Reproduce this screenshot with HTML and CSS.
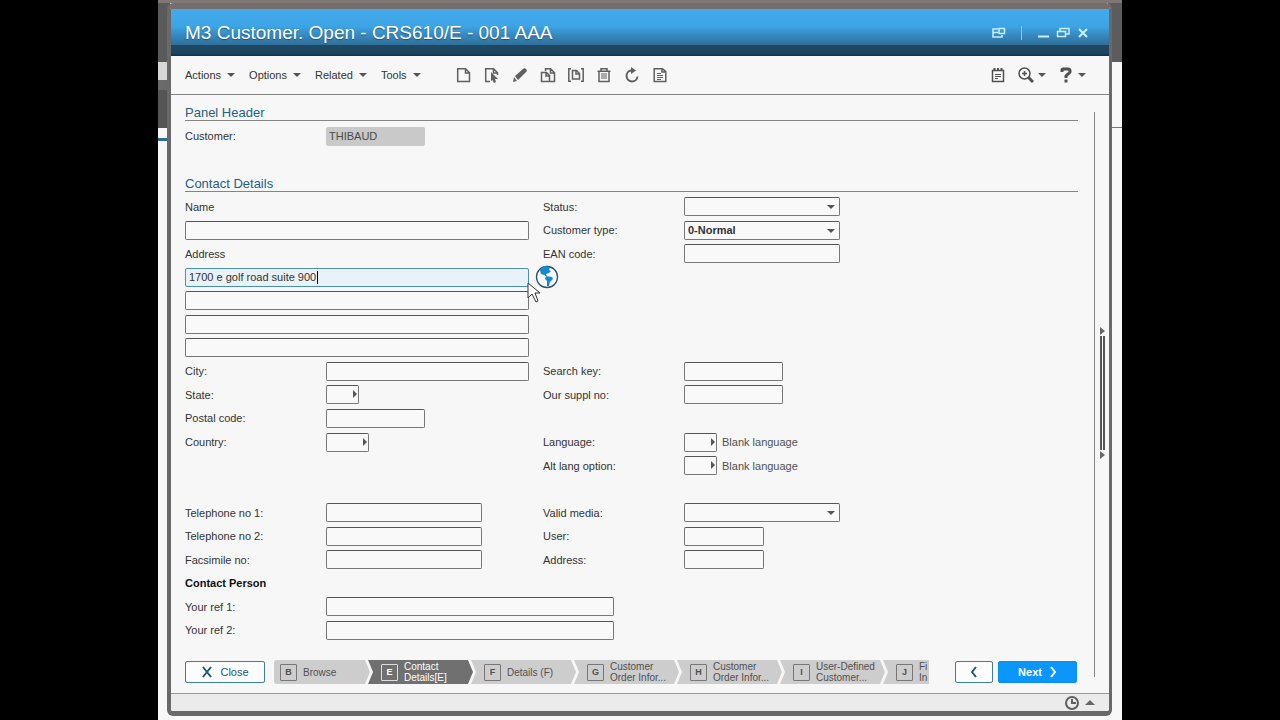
FILE: index.html
```html
<!DOCTYPE html>
<html lang="en">
<head>
<meta charset="utf-8">
<title>M3 Customer. Open - CRS610/E - 001 AAA</title>
<link rel="stylesheet" href="styles.css">
</head>
<body>
<div class="desktop">
<main class="window">
  <header class="titlebar">
    <h1>M3 Customer. Open - CRS610/E - 001 AAA</h1>
    <div class="window-controls">
      <button type="button" aria-label="Detach"><svg width="16" height="14" viewBox="0 0 16 14"><path d="M7 3H2v8h9V9M2 6.500h5M8 2.500h5.500v5H8z" stroke-width="1.500"/></svg></button>
      <span class="divider"></span>
      <button type="button" aria-label="Minimize"><svg width="14" height="14" viewBox="0 0 14 14"><path d="M2 10.500h11" stroke-width="2"/></svg></button>
      <button type="button" aria-label="Restore"><svg width="14" height="14" viewBox="0 0 14 14"><path d="M4 5V2.500h9V8h-3M1.500 5.500h8v5h-8z" stroke-width="1.500"/></svg></button>
      <button type="button" aria-label="Close window"><svg width="14" height="14" viewBox="0 0 14 14"><path d="M3 3l8 8M11 3l-8 8" stroke-width="2"/></svg></button>
    </div>
  </header>

  <nav class="toolbar">
    <div class="menus">
      <button type="button">Actions<i class="caret"></i></button>
      <button type="button">Options<i class="caret"></i></button>
      <button type="button">Related<i class="caret"></i></button>
      <button type="button">Tools<i class="caret"></i></button>
    </div>
    <div class="tools">
      <button type="button" aria-label="New"><svg viewBox="0 0 16 16"><path d="M1.700 1.700h7.800l4 4v8.800H1.700zM9.500 2v4h4"/></svg></button>
      <button type="button" aria-label="Select"><svg viewBox="0 0 16 16"><path d="M6 14.500H1.700V1.700h7.800l4 4V8M9.500 2v4h4"/><path class="solid" d="M7 5l7 7h-3l1 3-2 1-1.500-3L7 14z"/></svg></button>
      <button type="button" aria-label="Edit"><svg viewBox="0 0 16 16"><path class="solid" d="M1 15l1-5 3 4zM3 9l8-7q3-2 4 2l-9 9z"/></svg></button>
      <button type="button" aria-label="Copy"><svg viewBox="0 0 16 16"><path d="M5.500 4V1.700h5l4 4v8.800H10M10.500 2v4h4M1.500 5.500h5l3 3v6h-8zM6 6v3h3"/></svg></button>
      <button type="button" aria-label="Display"><svg viewBox="0 0 16 16"><path d="M3 1.700H.8v12.600H3M13 1.700h2.200v12.600H13M4.500 3.500h4l3 3v5.500h-7zM8 4v3h3"/></svg></button>
      <button type="button" aria-label="Delete"><svg viewBox="0 0 16 16"><path d="M1.500 4.200h13M5 4V1.700h6V4M3 5v9.500h10V5"/><path d="M6 6v6M8 6v6M10 6v6" stroke-width="1"/></svg></button>
      <button type="button" aria-label="Refresh"><svg viewBox="0 0 16 16"><path d="M9 3.500H7a5.500 5.500 0 1 0 6.500 6" stroke-width="2"/><path class="solid" d="M7 0l5 3.500L7 7z"/></svg></button>
      <button type="button" aria-label="Text"><svg viewBox="0 0 16 16"><path d="M2.200 1.700h8.300l3.300 3v9.800H2.200zM10 2v3h3"/><path d="M5 6.500h4M5 8.500h6M5 10.500h6M5 12.500h4" stroke-width="1"/></svg></button>
    </div>
    <div class="tools-right">
      <button type="button" aria-label="Notes"><svg viewBox="0 0 16 16"><path d="M2.500 3.500h11v11h-11z"/><path d="M4.500 1v3M8 1v3M11.500 1v3" stroke-width="2"/><path d="M5 7.500h6M5 9.500h6M5 11.500h3" stroke-width="1"/></svg></button>
      <button type="button" aria-label="Zoom"><svg viewBox="0 0 16 16"><path d="M12 6.500a5.500 5.500 0 1 1-11 0a5.500 5.500 0 1 1 11 0zM6.500 4v5M4 6.500h5"/><path d="M10.500 10.500l4.500 4.500" stroke-width="3"/></svg><i class="caret"></i></button>
      <button type="button" aria-label="Help"><svg viewBox="0 0 16 16"><path d="M4 5V3q0-1 1-1h5q2 0 2 2v1q0 1-2 2l-2 2v2M8 12.500v3" stroke-width="3"/></svg><i class="caret"></i></button>
    </div>
  </nav>

  <div class="content">
    <form class="panel">
      <h2>Panel Header</h2>
      <div class="customer-row">
        <label for="customer">Customer:</label>
        <input id="customer" class="w-key locked" value="THIBAUD" readonly>
      </div>
      <h2>Contact Details</h2>
      <div class="fields">
        <label class="r1" for="name">Name</label>
        <label class="r1 c3" for="status">Status:</label>
        <span class="r1 c4 select"><select id="status"><option></option></select></span>

        <input class="r2 wide" id="name">
        <label class="r2 c3" for="type">Customer type:</label>
        <span class="r2 c4 select"><select id="type"><option>0-Normal</option></select></span>

        <label class="r3" for="address1">Address</label>
        <label class="r3 c3" for="ean">EAN code:</label>
        <input class="r3 c4 w-long" id="ean">

        <div class="r4 address-row">
          <span class="active-field"><input id="address1" value="1700 e golf road suite 900"><i class="text-cursor"></i></span>
          <button type="button" class="globe" aria-label="Look up address"><svg width="24" height="24" viewBox="0 0 24 24"><circle cx="12" cy="12" r="10.500" fill="#fafcff" stroke="#28516f" stroke-width="1.300"/><path stroke="none" fill="#1689d4" d="M6 3l4-2 5 1-1 3 2 1-2 2-3 1 1 3-3-2-3-1-1-4zM11 11l6 1 1 2-3 3-1 4-2 0 0-5-2-2z"/></svg></button>
          <svg class="pointer" width="14" height="21" viewBox="0 0 14 21"><path d="M1 1v15l4-4 4 8 2-1-3-8h5z" fill="#fff" stroke="#333"/></svg>
        </div>
        <input class="r5 wide" aria-label="Address line 2">
        <input class="r6 wide" aria-label="Address line 3">
        <input class="r7 wide" aria-label="Address line 4">

        <label class="r8" for="city">City:</label>
        <input class="r8 c2 w-city" id="city">
        <label class="r8 c3" for="search">Search key:</label>
        <input class="r8 c4 w-key" id="search">

        <label class="r9" for="state">State:</label>
        <span class="r9 c2 lookup"><input id="state"></span>
        <label class="r9 c3" for="suppl">Our suppl no:</label>
        <input class="r9 c4 w-key" id="suppl">

        <label class="r10" for="postal">Postal code:</label>
        <input class="r10 c2 w-key" id="postal">

        <label class="r11" for="country">Country:</label>
        <span class="r11 c2 lookup lookup-wide"><input id="country"></span>
        <label class="r11 c3" for="language">Language:</label>
        <div class="r11 c4 with-note"><span class="lookup"><input id="language"></span><span>Blank language</span></div>

        <label class="r12 c3" for="altlang">Alt lang option:</label>
        <div class="r12 c4 with-note"><span class="lookup"><input id="altlang"></span><span>Blank language</span></div>

        <label class="r14" for="tel1">Telephone no 1:</label>
        <input class="r14 c2 w-long" id="tel1">
        <label class="r14 c3" for="media">Valid media:</label>
        <span class="r14 c4 select"><select id="media"><option></option></select></span>

        <label class="r15" for="tel2">Telephone no 2:</label>
        <input class="r15 c2 w-long" id="tel2">
        <label class="r15 c3" for="user">User:</label>
        <input class="r15 c4 w-user" id="user">

        <label class="r16" for="fax">Facsimile no:</label>
        <input class="r16 c2 w-long" id="fax">
        <label class="r16 c3" for="addr">Address:</label>
        <input class="r16 c4 w-user" id="addr">

        <h3 class="r17">Contact Person</h3>
        <label class="r18" for="ref1">Your ref 1:</label>
        <input class="r18 ref" id="ref1">
        <label class="r19" for="ref2">Your ref 2:</label>
        <input class="r19 ref" id="ref2">
      </div>

      <div class="actions">
        <button type="button" class="btn close"><svg width="12" height="12" viewBox="0 0 12 12"><path d="M2 1l8 10M10 1L2 11"/></svg>Close</button>
        <div class="steps">
          <button type="button" class="step first"><b>B</b><span>Browse</span></button>
          <button type="button" class="step current"><b>E</b><span>Contact<br>Details[E]</span></button>
          <button type="button" class="step"><b>F</b><span>Details (F)</span></button>
          <button type="button" class="step"><b>G</b><span>Customer<br>Order Infor...</span></button>
          <button type="button" class="step"><b>H</b><span>Customer<br>Order Infor...</span></button>
          <button type="button" class="step"><b>I</b><span>User-Defined<br>Customer...</span></button>
          <button type="button" class="step last"><b>J</b><span>Fi<br>In</span></button>
        </div>
        <button type="button" class="btn prev" aria-label="Previous"><svg width="8" height="12" viewBox="0 0 8 12"><path d="M6 1L2 6l4 5"/></svg></button>
        <button type="button" class="btn next">Next<svg width="8" height="12" viewBox="0 0 8 12"><path d="M2 1l4 5-4 5"/></svg></button>
      </div>
    </form>
    <div class="splitter"><i class="arrow"></i><i class="grip"></i><i class="arrow"></i></div>
  </div>

  <footer class="statusbar">
    <svg width="16" height="16" viewBox="0 0 16 16"><circle cx="8" cy="8" r="6"/><path d="M8 4v4h4"/></svg>
    <i class="up"></i>
  </footer>
</main>
</div>
</body>
</html>
```
FILE: styles.css
```css
* { box-sizing: border-box; }

body {
  margin: 0;
  background: #000;
  color: #333;
  font: 11px/14px "Liberation Sans", Arial, sans-serif;
}

button, input, select { font: inherit; color: inherit; margin: 0; }
button { background: none; border: 0; padding: 0; }
svg { display: block; fill: none; stroke: currentColor; }
i { display: block; }
h1, h2, h3 { margin: 0; }

.desktop {
  min-height: 100vh;
  margin: 0 158px;
  padding: 3px 10px 4px 9px;
  display: flex;
  background:
    linear-gradient(#807876 0 3px, transparent 3px),
    linear-gradient(#5a5a5a 0 62px, #d8d8d8 62px 80px, #6a6a6a 80px 90px, #555 90px 128px, transparent 128px 138px, #2f6f96 138px 141px, transparent 141px) left / 12px 100% no-repeat,
    linear-gradient(#5c5c5c 0 62px, #f8f8f8 62px 127px, #777 127px 128px, transparent 128px) right / 14px 100% no-repeat,
    #f8f8f8;
}

.window {
  flex: 1;
  min-width: 0;
  display: flex;
  flex-direction: column;
  border: solid #696969;
  border-width: 6px 3px 5px 4px;
  border-top-color: #746d6b;
  border-radius: 6px;
  background: #f7f7f7;
}

.titlebar {
  height: 47px;
  padding: 0 19px 0 14px;
  display: flex;
  align-items: center;
  justify-content: space-between;
  color: #fff;
  background: linear-gradient(#43abec 0, #3da5e6 17px, #3587bd 27px, #306f99 36px, #20475f 36px, #1d4661 44px, #142d4d 47px);
}
.titlebar h1 { font-size: 19px; line-height: 24px; font-weight: normal; text-shadow: 0 1px 1px #24516f; }
.window-controls { display: flex; align-items: center; gap: 6px; color: #c8f0ff; }
.divider { width: 1px; height: 14px; margin: 0 8px; background: #8cc8e8; }

.toolbar {
  height: 39px;
  padding: 0 23px 0 14px;
  display: flex;
  align-items: center;
  border-bottom: 1px solid #858585;
}
.menus { display: flex; width: 271px; gap: 14px; }
.menus button, .tools-right button { display: flex; align-items: center; gap: 6px; }
.caret {
  border: 4px solid transparent;
  border-top-color: #555;
  border-bottom: 0;
}
.tools { display: flex; gap: 12px; flex: 1; color: #606060; }
.tools svg, .tools-right svg { width: 16px; height: 16px; stroke-width: 1.5; }
.tools .solid { fill: currentColor; stroke: none; }
.tools-right { display: flex; gap: 12px; color: #505050; }
.tools-right button { gap: 4px; }

.content { flex: 1; display: flex; padding: 9px 0 9px 14px; }
.panel { flex: 1; min-width: 0; display: flex; flex-direction: column; }

h2 {
  height: 17px;
  margin-right: 16px;
  border-bottom: 1px solid #858585;
  color: #235f88;
  font-size: 13px;
  line-height: 17px;
  font-weight: normal;
}
h3 { font-size: 11px; line-height: 14px; color: #111; white-space: nowrap; }
label { white-space: nowrap; }

input, select {
  width: 100%;
  height: 19px;
  padding: 0 3px;
  border: 1px solid #777;
  border-top-color: #555;
  border-radius: 2px;
  background: #f9f9f9;
  outline: 0;
}
select { appearance: none; display: block; font-weight: bold; }

.customer-row {
  display: grid;
  grid-template-columns: 141px 1fr;
  align-items: center;
  height: 30px;
  margin-bottom: 24px;
}
.locked { border: 0; background: #c9c9c9; color: #4a4a4a; }

.fields {
  flex: 1;
  display: grid;
  grid-template-columns: 141px 217px 141px 1fr;
  grid-template-rows: repeat(19, 1fr);
  align-items: center;
  margin: 3px 0 18px;
}
.r1 { grid-row: 1; } .r2 { grid-row: 2; } .r3 { grid-row: 3; } .r4 { grid-row: 4; }
.r5 { grid-row: 5; } .r6 { grid-row: 6; } .r7 { grid-row: 7; } .r8 { grid-row: 8; }
.r9 { grid-row: 9; } .r10 { grid-row: 10; } .r11 { grid-row: 11; } .r12 { grid-row: 12; }
.r14 { grid-row: 14; } .r15 { grid-row: 15; } .r16 { grid-row: 16; } .r17 { grid-row: 17; }
.r18 { grid-row: 18; } .r19 { grid-row: 19; }
.c2 { grid-column: 2; } .c3 { grid-column: 3; } .c4 { grid-column: 4; }
.wide { grid-column: 1 / 3; width: 344px; }
.ref { grid-column: 2 / 4; width: 288px; }
.w-key { width: 99px; }
.w-long, .select { width: 156px; }
.w-city { width: 203px; }
.w-user { width: 80px; }

.select, .lookup { position: relative; display: block; }
.lookup { width: 33px; }
.lookup-wide { width: 43px; }
.lookup input { display: block; }
.select::after, .lookup::after {
  content: "";
  position: absolute;
  border: 4px solid transparent;
}
.select::after { right: 5px; top: 8px; border-top-color: #555; border-bottom: 0; }
.lookup::after { right: 2px; top: 5px; border-left-color: #555; border-right: 0; }
.with-note { display: flex; align-items: center; gap: 5px; color: #505050; }

.address-row {
  grid-column: 1 / 4;
  position: relative;
  height: 19px;
  display: flex;
  align-items: center;
  gap: 6px;
}
.active-field { position: relative; width: 344px; }
.active-field input { display: block; border-color: #4a8fae; background: #e9f2f8; }
.text-cursor { position: absolute; left: 132px; top: 3px; width: 1px; height: 13px; background: #000; }
.pointer { position: absolute; left: 342px; top: 14px; }

.actions { display: flex; align-items: center; height: 24px; margin-right: 17px; }
.btn {
  height: 22px;
  flex: none;
  display: flex;
  align-items: center;
  justify-content: center;
  gap: 7px;
  border: 1px solid #3b7f9f;
  border-radius: 2px;
  background: #fcfcfc;
  color: #1b5876;
}
.btn svg { stroke-width: 2; }
.close { width: 80px; margin-right: 9px; }
.prev { width: 38px; margin: 0 5px 0 26px; }
.next { width: 79px; border-color: #0a8df0; background: #0a96fb; color: #fff; font-weight: bold; }

.steps { flex: 1; min-width: 0; display: flex; overflow: hidden; border-radius: 3px 0 0 3px; }
.step {
  flex: none;
  width: 105px;
  height: 24px;
  margin-right: -2px;
  padding-left: 13px;
  display: flex;
  align-items: center;
  gap: 6px;
  background: #cdcdcd;
  color: #505050;
  font-size: 10px;
  line-height: 11px;
  text-align: left;
  white-space: nowrap;
  clip-path: polygon(0 0, calc(100% - 5px) 0, 100% 50%, calc(100% - 5px) 100%, 0 100%, 5px 50%);
}
.step b {
  width: 17px;
  height: 17px;
  border: 1px solid #777;
  border-radius: 1px;
  font-size: 9px;
  line-height: 15px;
  text-align: center;
}
.first {
  width: 96px;
  padding-left: 6px;
  clip-path: polygon(0 0, calc(100% - 5px) 0, 100% 50%, calc(100% - 5px) 100%, 0 100%);
}
.current { background: #707070; color: #fff; }
.current b { border-color: #ddd; }
.last {
  flex: 1;
  min-width: 0;
  margin-right: 0;
  clip-path: polygon(0 0, 100% 0, 100% 100%, 0 100%, 5px 50%);
}

.splitter {
  width: 15px;
  margin: 8px 0 7px;
  padding-bottom: 4px;
  border-left: 1px solid #858585;
  display: flex;
  flex-direction: column;
  align-items: center;
  justify-content: center;
  gap: 1px;
}
.grip { width: 5px; height: 114px; border: solid #555; border-width: 0 2px; }
.arrow { border: 4px solid transparent; border-left: 5px solid #666; border-right: 0; }

.statusbar {
  height: 18px;
  padding-right: 14px;
  display: flex;
  align-items: center;
  justify-content: flex-end;
  gap: 5px;
  border-top: 1px solid #999;
  border-radius: 0 0 3px 3px;
  background: #ebebeb;
  color: #606060;
}
.statusbar svg { stroke-width: 2; }
.up { border: 5px solid transparent; border-bottom-color: #666; border-top: 0; }
```
